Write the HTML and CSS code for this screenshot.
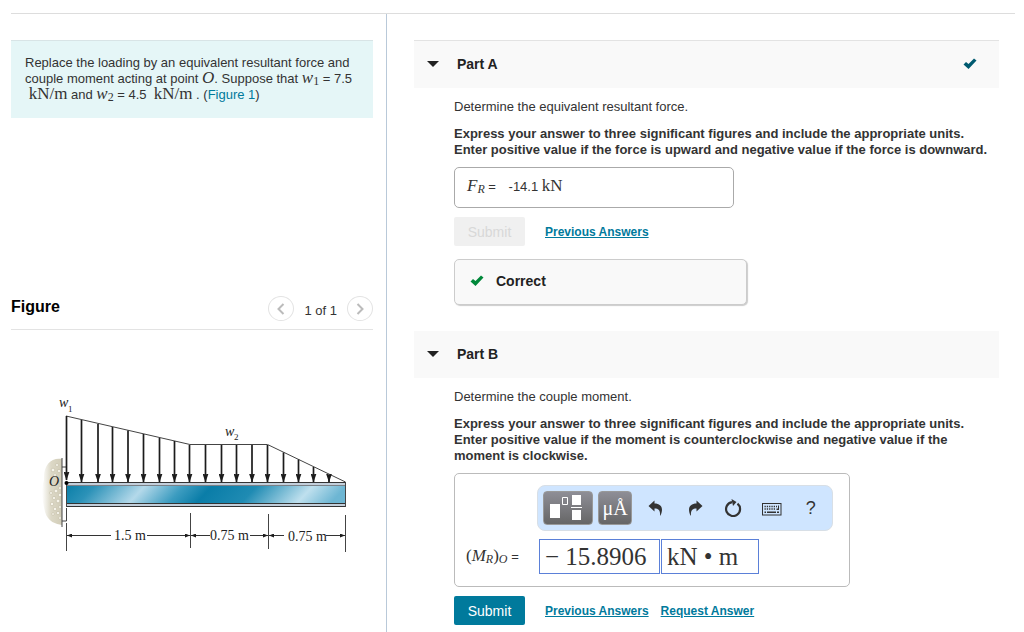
FILE: index.html
```html
<!DOCTYPE html>
<html lang="en">
<head>
  <meta charset="UTF-8">
  <meta name="viewport" content="width=device-width, initial-scale=1.0">
  <title>Resultant Force and Couple Moment</title>
  <link rel="stylesheet" href="styles.css">
</head>
<body>

  <div class="page">

    <!-- Problem and figure -->
    <aside class="sidebar">
      <div class="problem">
        Replace the loading by an equivalent resultant force and couple moment acting at point <span class="math"><i>O</i></span>. Suppose that <span class="math"><i>w</i><sub>1</sub></span> = 7.5 &nbsp;<span class="math">kN/m</span> and <span class="math"><i>w</i><sub>2</sub></span> = 4.5 &nbsp;<span class="math">kN/m</span> . (<a href="#figure">Figure 1</a>)
      </div>

      <div class="figure-header">
        <h2>Figure</h2>
        <div class="pager">
          <button type="button" aria-label="Previous figure">
            <svg width="8" height="12" viewBox="0 0 8 12"><path d="M6.5 1 L1.5 6 L6.5 11" /></svg>
          </button>
          <span>1 of 1</span>
          <button type="button" aria-label="Next figure">
            <svg width="8" height="12" viewBox="0 0 8 12"><path d="M1.5 1 L6.5 6 L1.5 11" /></svg>
          </button>
        </div>
      </div>

      <svg class="beam" id="figure" viewBox="11 390 362 170" role="img" aria-label="Beam with distributed loads w1 and w2">
        <defs>
          <linearGradient id="web" x1="0" y1="0" x2="1" y2="0.06">
            <stop offset="0" stop-color="#0b7fa8" />
            <stop offset="0.1" stop-color="#2c92b8" />
            <stop offset="0.28" stop-color="#b4d9ea" />
            <stop offset="0.42" stop-color="#3c9cc0" />
            <stop offset="0.52" stop-color="#0a7da8" />
            <stop offset="0.68" stop-color="#1f8bb3" />
            <stop offset="0.88" stop-color="#bfe0ee" />
            <stop offset="1" stop-color="#6db6d3" />
          </linearGradient>
          <linearGradient id="soil">
            <stop offset="0" stop-color="#dcd8c6" stop-opacity="0" />
            <stop offset="0.45" stop-color="#dcd8c6" />
            <stop offset="1" stop-color="#d2cdb8" />
          </linearGradient>
          <marker id="load" markerUnits="userSpaceOnUse" markerWidth="6" markerHeight="9" refX="3" refY="8.500" orient="0">
            <path d="M0 0 L3 1 L6 0 L3 9 Z" fill="#1c1c1c" />
          </marker>
          <marker id="dim" markerUnits="userSpaceOnUse" markerWidth="5" markerHeight="4" refX="5" refY="2" orient="auto-start-reverse">
            <path d="M0 0 L5 2 L0 4 Z" fill="#1c1c1c" />
          </marker>
        </defs>

        <!-- Wall -->
        <path d="M62 459 C52 457 43 464 44 480 C40 492 43 502 45 512 C48 522 56 524 62 525 Z" fill="url(#soil)" />
        <g class="gravel">
          <circle cx="57" cy="465" r="1.500" /><circle cx="53" cy="470" r="1.800" /><circle cx="59" cy="471" r="1.600" />
          <circle cx="55" cy="475" r="1.400" /><circle cx="60" cy="488" r="1.500" /><circle cx="56" cy="491" r="1.800" />
          <circle cx="51" cy="493" r="1.500" /><circle cx="60" cy="495" r="1.700" /><circle cx="54" cy="498" r="1.600" />
          <circle cx="58" cy="501" r="1.800" /><circle cx="52" cy="504" r="1.700" /><circle cx="60" cy="507" r="1.500" />
          <circle cx="55" cy="509" r="1.700" /><circle cx="58" cy="513" r="1.600" /><circle cx="53" cy="514" r="1.300" />
          <circle cx="60" cy="518" r="1.400" />
        </g>
        <path class="thin" d="M62 458 V527 M62 467 H66 M62 521 H66.500 V508" />

        <!-- Beam -->
        <rect class="flange" x="66.500" y="482.500" width="279" height="3.500" />
        <rect x="66.500" y="486" width="279" height="18" fill="url(#web)" />
        <rect class="flange" x="66.500" y="503.500" width="279" height="3" />
        <path class="thin" d="M66.500 482 V507 M345.500 482 V507" />

        <!-- Load -->
        <path class="thin" d="M66 416 L190 444.500 H267.500 L345.500 482" />
        <g class="arrows">
          <path d="M66.500 416 V480" /><path d="M81.500 420 V482" /><path d="M98 424 V482" />
          <path d="M112.500 427 V482" /><path d="M128 430.500 V482" /><path d="M143.500 434 V482" />
          <path d="M159.500 438 V482" /><path d="M174.500 441 V482" /><path d="M189.500 445 V482" />
          <path d="M205.500 445 V482" /><path d="M221.500 445 V482" /><path d="M236.500 445 V482" />
          <path d="M252 445 V482" /><path d="M267.500 445 V482" /><path d="M283.500 452.500 V482" />
          <path d="M298.500 459.500 V482" /><path d="M313.500 467 V482" /><path d="M329 475 V482" />
        </g>
        <circle cx="66.500" cy="483" r="2" />

        <!-- Dimensions -->
        <path class="thin" d="M66.500 523 V551 M190.500 513 V548 M268.500 514 V549 M345.500 515 V552" />
        <g class="dims">
          <path d="M111 535.500 H67" /><path d="M147 535.500 H190" />
          <path d="M210 535.500 H191" /><path d="M250 535.500 H268" />
          <path d="M284 535.500 H269" /><path d="M326 535.500 H345" />
        </g>
        <g class="labels">
          <text x="59" y="407" font-style="italic">w</text><text x="68" y="412" font-size="9">1</text>
          <text x="225" y="436" font-style="italic">w</text><text x="234" y="440" font-size="9">2</text>
          <text x="49" y="486" font-style="italic">O</text>
          <text x="114" y="540">1.5 m</text>
          <text x="210" y="540">0.75 m</text>
          <text x="288" y="541">0.75 m</text>
        </g>
      </svg>
    </aside>

    <!-- Answers -->
    <main class="parts">
      <section class="part">
        <header class="part-header first">
          <button type="button" class="toggle" aria-expanded="true"><span class="caret"></span>Part A</button>
          <svg class="check" width="14" height="12" viewBox="0 0 14 12" aria-label="Complete"><path d="M0.500 6.500 L3 4 L5.500 6 L11 0.500 L13.500 2.500 L5.500 11 Z" /></svg>
        </header>
        <div class="part-body">
          <p>Determine the equivalent resultant force.</p>
          <p class="instructions">Express your answer to three significant figures and include the appropriate units.<br>Enter positive value if the force is upward and negative value if the force is downward.</p>
          <div class="answer">
            <span class="math"><i>F<sub>R</sub></i></span> = <span class="value">-14.1 <span class="math">kN</span></span>
          </div>
          <div class="actions">
            <button type="submit" class="submit" disabled>Submit</button>
            <a href="#previous-a">Previous Answers</a>
          </div>
          <div class="feedback">
            <svg class="check green" width="14" height="12" viewBox="0 0 14 12"><path d="M0.500 6.500 L3 4 L5.500 6 L11 0.500 L13.500 2.500 L5.500 11 Z" /></svg>
            Correct
          </div>
        </div>
      </section>

      <section class="part">
        <header class="part-header">
          <button type="button" class="toggle" aria-expanded="true"><span class="caret"></span>Part B</button>
        </header>
        <form class="part-body">
          <p>Determine the couple moment.</p>
          <p class="instructions">Express your answer to three significant figures and include the appropriate units.<br>Enter positive value if the moment is counterclockwise and negative value if the<br>moment is clockwise.</p>
          <div class="editor">
            <div class="toolbar">
              <button type="button" class="tool templates" aria-label="Templates">
                <svg width="50" height="34" viewBox="0 0 50 34">
                  <path d="M7 13 H17 V27 H7 Z M29 4 H38 V14 H29 Z M29 19 H38 V29 H29 Z M28 16 H39 V17 H28 Z" fill="#fff" />
                  <path d="M19.500 6.500 H24.500 V13.500 H19.500 Z" fill="none" stroke="#fff" />
                </svg>
              </button>
              <button type="button" class="tool units">μÅ</button>
              <button type="button" class="icon" aria-label="Undo">
                <svg width="16" height="16" viewBox="0 0 16 16"><path d="M0.500 6 L6.500 0.500 V3.500 C13 3.500 16 8 12.500 15.500 H12 C12.500 10.500 10.500 8.500 6.500 8.500 V11.500 Z" /></svg>
              </button>
              <button type="button" class="icon" aria-label="Redo">
                <svg width="16" height="16" viewBox="0 0 16 16"><path d="M15.500 6 L9.500 0.500 V3.500 C3 3.500 0 8 3.500 15.500 H4 C3.500 10.500 5.500 8.500 9.500 8.500 V11.500 Z" /></svg>
              </button>
              <button type="button" class="icon" aria-label="Reset">
                <svg width="18" height="18" viewBox="0 0 18 18"><path d="M13.500 4.600 A7 7 0 1 1 8 3.100" fill="none" stroke="#333" stroke-width="2.200" /><path d="M7.500 0 L12.500 3 L9 7 Z" /></svg>
              </button>
              <button type="button" class="icon" aria-label="Keyboard shortcuts">
                <svg width="20" height="16" viewBox="0 0 20 16">
                  <rect x="0.500" y="3.500" width="18.500" height="11.500" fill="none" stroke="#333" />
                  <path d="M2.500 6.500 H15 M2.500 9 H14" fill="none" stroke="#333" stroke-width="1.300" stroke-dasharray="1.300 1" />
                  <path d="M2.500 11.500 H4 V13 H2.500 Z M5 11.500 H14 V13 H5 Z M15 11.500 H17 V13 H15 Z M16 5.500 H17 V10 H14.500 V8.500 H16 Z" />
                </svg>
              </button>
              <button type="button" class="icon help" aria-label="Help">?</button>
            </div>
            <div class="entry">
              <label for="moment"><span class="math">(<i>M</i><sub class="small"><i>R</i></sub>)<sub><i>O</i></sub></span> =</label>
              <input type="text" class="moment" id="moment" value="− 15.8906">
              <input type="text" class="unit" aria-label="Units" value="kN • m">
            </div>
          </div>
          <div class="actions">
            <button type="submit" class="submit">Submit</button>
            <a href="#previous-b">Previous Answers</a>
            <a href="#request">Request Answer</a>
          </div>
        </form>
      </section>
    </main>

  </div>

</body>
</html>
```
FILE: styles.css
```css
* {
  margin: 0;
  padding: 0;
  box-sizing: border-box;
}
body {
  font-family: "Liberation Sans", Arial, sans-serif;
  font-size: 13px;
  line-height: 16px;
  color: #333;
  background-color: #fff;
}
button, input {
  font-family: inherit;
}
button {
  border: none;
  background: none;
  cursor: pointer;
}
a {
  color: #007a9c;
}
.page {
  display: grid;
  grid-template-columns: 376px 1fr;
  min-height: calc(100vh - 13px);
  margin: 13px 9px 0 11px;
  border-top: 1px solid #ddd;
}
.math {
  font-family: "Liberation Serif", "Times New Roman", serif;
  font-size: 17px;
  line-height: 1px;
}
.math sub {
  font-size: 12px;
  line-height: 1px;
  vertical-align: -2px;
}

/* Problem */
.sidebar {
  padding: 26px 13px 0 0;
  border-right: 1px solid #b9c9d9;
}
.problem {
  padding: 14px 13px 15px 14px;
  background-color: #e5f6f7;
  border-top: 1px solid #d8e4e6;
}
.problem a {
  text-decoration: none;
}
.figure-header {
  display: flex;
  justify-content: space-between;
  align-items: center;
  margin-top: 178px;
  padding-bottom: 8px;
  border-bottom: 1px solid #e3e3e3;
}
.figure-header h2 {
  font-size: 16px;
  line-height: 20px;
  color: #000;
  padding-bottom: 4px;
}
.pager {
  display: flex;
  align-items: center;
  gap: 10px;
}
.pager span {
  padding-top: 4px;
}
.pager button {
  display: flex;
  align-items: center;
  justify-content: center;
  width: 26px;
  height: 25px;
  border: 1px solid #e3e3e3;
  border-radius: 50%;
}
.pager path {
  fill: none;
  stroke: #bbb;
  stroke-width: 2;
}

/* Beam drawing */
.beam {
  display: block;
  width: 100%;
  margin-top: 60px;
}
.beam .thin {
  fill: none;
  stroke: #444;
  stroke-width: 1;
}
.beam .flange {
  fill: #c3cfdb;
  stroke: #333;
  stroke-width: 1;
}
.beam .gravel {
  fill: #f6f4ea;
  stroke: #b3ac92;
  stroke-width: 0.4;
}
.beam .arrows path {
  stroke: #1c1c1c;
  stroke-width: 1.7;
  marker-end: url(#load);
}
.beam .dims path {
  stroke: #333;
  stroke-width: 1;
  marker-end: url(#dim);
}
.beam .labels {
  font-family: "Liberation Serif", "Times New Roman", serif;
  font-size: 14px;
  fill: #222;
}

/* Parts */
.parts {
  padding: 26px 16px 0 27px;
}
.part-header {
  display: flex;
  align-items: center;
  justify-content: space-between;
  height: 47px;
  padding: 0 22px 2px 13px;
  background-color: #f9f9f9;
}
.part-header.first {
  height: 48px;
  border-top: 1px solid #e3e3e3;
}
.toggle {
  display: flex;
  align-items: center;
  gap: 18px;
  font-size: 14px;
  font-weight: bold;
  color: #222;
}
.caret {
  border-left: 6px solid transparent;
  border-right: 6px solid transparent;
  border-top: 6px solid #222;
}
.check {
  fill: #005a70;
}
.check.green {
  fill: #00883a;
}
.part-body {
  padding: 11px 0 26px 40px;
}
.instructions {
  margin: 11px 0 9px;
  font-weight: bold;
}
.answer {
  max-width: 280px;
  height: 41px;
  padding: 11px 12px;
  border: 1px solid #aaa;
  border-radius: 5px;
}
.value {
  margin-left: 9px;
}
.actions {
  display: flex;
  align-items: center;
  gap: 12px;
  margin-top: 9px;
}
.actions a {
  font-size: 12px;
  font-weight: bold;
}
.submit {
  width: 71px;
  height: 29px;
  margin-right: 8px;
  font-size: 14px;
  color: #fff;
  background-color: #007a9c;
  border-radius: 2px;
}
.submit:disabled {
  color: #d8d8d8;
  background-color: #f0f0f0;
  cursor: default;
}
.feedback {
  display: flex;
  align-items: center;
  gap: 12px;
  max-width: 293px;
  height: 46px;
  margin-top: 13px;
  padding: 0 15px 2px;
  font-size: 14px;
  font-weight: bold;
  color: #222;
  background-color: #f9f9f9;
  border: 1px solid #ccc;
  border-radius: 5px;
  box-shadow: 1px 1px 1px #ccc;
}

/* Answer editor */
.editor {
  max-width: 396px;
  padding: 11px 16px 12px 11px;
  border: 1px solid #bbb;
  border-radius: 5px;
}
.toolbar {
  display: flex;
  align-items: center;
  height: 46px;
  margin-left: 71px;
  padding: 0 2px 0 5px;
  background-color: #cfe5ff;
  border: 1px solid #d8dfe6;
  border-radius: 8px;
}
.tool {
  height: 34px;
  margin-right: 5px;
  color: #fff;
  background: linear-gradient(#8e8e96, #666);
  border: 1px solid #999;
  border-radius: 4px;
}
.templates {
  width: 50px;
}
.templates svg {
  display: block;
  margin: -1px;
}
.units {
  width: 34px;
  font-family: "Liberation Serif", "Times New Roman", serif;
  font-size: 20px;
}
.icon {
  display: flex;
  flex: 1;
  align-items: center;
  justify-content: center;
  height: 34px;
  fill: #333;
}
.help {
  font-size: 18px;
  color: #333;
}
.entry {
  display: flex;
  align-items: center;
  gap: 1px;
  margin-top: 8px;
}
.entry label {
  width: 72px;
  white-space: nowrap;
}
.entry .small {
  font-size: 12px;
}
.entry input {
  height: 35px;
  padding: 0 5px;
  font-family: "Liberation Serif", "Times New Roman", serif;
  font-size: 25px;
  color: #333;
  border: 1px solid #5b80d8;
}
.moment {
  width: 121px;
}
.unit {
  width: 98px;
}
```
